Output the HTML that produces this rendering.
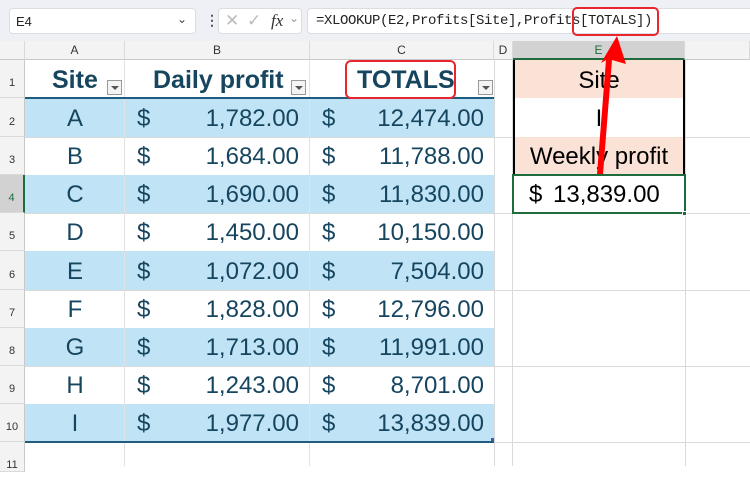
<!DOCTYPE html>
<html><head><meta charset="utf-8"><style>
*{margin:0;padding:0;box-sizing:border-box}
body{width:750px;height:466px;overflow:hidden;background:#fff;font-family:"Liberation Sans",sans-serif;position:relative}
.abs{position:absolute}
.tb{left:0;top:0;width:750px;height:41px;background:#eff0f5}
.box{background:#fff;border:1px solid #dcdde2;border-radius:4px;top:8px;height:26px}
.ch{top:41px;height:19px;background:#f3f3f3;border-bottom:1px solid #c8c8c8;font-size:12px;color:#333;text-align:center;line-height:19px;border-right:1px solid #dadada}
.rh{left:0;width:25px;background:#f3f3f3;border-right:1px solid #c8c8c8;border-bottom:1px solid #dadada;font-size:11px;color:#333;text-align:center}
.cell{font-size:24px;color:#16455f;white-space:nowrap}
.vl{width:1px;background:#dadada}
.hl{height:1px;background:#dadada;left:25px;width:725px}
.dd{width:15px;height:15px;border:1px solid #999;background:#f4f4f4}
.dd:after{content:"";position:absolute;left:3px;top:5px;border-left:4px solid transparent;border-right:4px solid transparent;border-top:4px solid #555}
</style></head><body>
<div class="abs tb"></div>
<div class="abs box" style="left:9px;width:187px"><span class="abs" style="left:6px;top:5px;font-size:13px;color:#222">E4</span><span class="abs" style="right:8px;top:3px;font-size:12px;color:#444">&#8964;</span></div>
<div class="abs" style="left:205px;top:12px;font-size:14px;color:#555;font-weight:bold">&#8942;</div>
<div class="abs box" style="left:218px;width:84px"><span class="abs" style="left:6px;top:2px;font-size:17px;color:#bbb">&#10005;</span><span class="abs" style="left:28px;top:2px;font-size:17px;color:#bbb">&#10003;</span><span class="abs" style="left:52px;top:2px;font-size:17px;font-style:italic;font-family:'Liberation Serif',serif;color:#333">fx</span><span class="abs" style="left:70px;top:2px;font-size:12px;color:#999">&#8964;</span></div>
<div class="abs box" style="left:307px;width:450px"><span class="abs" style="left:8px;top:4px;font-size:14px;font-family:'Liberation Mono',monospace;color:#222;letter-spacing:-0.4px">=XLOOKUP(E2,Profits[Site],Profits[TOTALS])</span></div>
<div class="abs" style="left:572px;top:7px;width:87px;height:29px;border:2px solid #e8262e;border-radius:5px"></div>

<div class="abs ch" style="left:0;width:25px"></div>
<div class="abs ch" style="left:25px;width:100px">A</div>
<div class="abs ch" style="left:125px;width:185px">B</div>
<div class="abs ch" style="left:310px;width:184px">C</div>
<div class="abs ch" style="left:494px;width:19px">D</div>
<div class="abs ch" style="left:513px;width:172px;background:#d2d2d2;color:#1e6b3c;border-bottom:2px solid #1e6b3c">E</div>
<div class="abs ch" style="left:685px;width:65px"></div>

<div class="abs rh" style="top:60px;height:38px;line-height:46px">1</div>
<div class="abs rh" style="top:98px;height:39px;line-height:48px">2</div>
<div class="abs rh" style="top:137px;height:38px;line-height:46px">3</div>
<div class="abs rh" style="top:175px;height:38px;line-height:46px;background:#d2d2d2;color:#1e6b3c;border-right:2px solid #1e6b3c">4</div>
<div class="abs rh" style="top:213px;height:38px;line-height:46px">5</div>
<div class="abs rh" style="top:251px;height:39px;line-height:48px">6</div>
<div class="abs rh" style="top:290px;height:38px;line-height:46px">7</div>
<div class="abs rh" style="top:328px;height:38px;line-height:46px">8</div>
<div class="abs rh" style="top:366px;height:38px;line-height:46px">9</div>
<div class="abs rh" style="top:404px;height:38px;line-height:46px">10</div>
<div class="abs rh" style="top:442px;height:30px;line-height:46px">11</div>

<div class="abs" style="left:25px;top:98px;width:469px;height:39px;background:#c0e4f5"></div>
<div class="abs" style="left:25px;top:175px;width:469px;height:38px;background:#c0e4f5"></div>
<div class="abs" style="left:25px;top:251px;width:469px;height:39px;background:#c0e4f5"></div>
<div class="abs" style="left:25px;top:328px;width:469px;height:38px;background:#c0e4f5"></div>
<div class="abs" style="left:25px;top:404px;width:469px;height:38px;background:#c0e4f5"></div>

<div class="abs vl" style="left:124px;top:60px;height:406px;background:#e2e2e2"></div>
<div class="abs vl" style="left:309px;top:60px;height:406px;background:#e2e2e2"></div>
<div class="abs vl" style="left:494px;top:60px;height:406px"></div>
<div class="abs vl" style="left:512px;top:60px;height:406px"></div>
<div class="abs vl" style="left:685px;top:60px;height:406px"></div>
<div class="abs hl" style="top:213px"></div>
<div class="abs hl" style="top:290px"></div>
<div class="abs hl" style="top:366px"></div>
<div class="abs hl" style="top:137px"></div>
<div class="abs hl" style="top:442px"></div>
<div class="abs" style="left:25px;top:97px;width:469px;height:2px;background:#1f5c80"></div>
<div class="abs" style="left:25px;top:441px;width:469px;height:2px;background:#1f5c80"></div>

<div class="abs cell" style="left:52px;top:66px;font-weight:bold;font-size:25px">Site</div>
<div class="abs dd" style="left:107px;top:80px"></div>
<div class="abs cell" style="left:153px;top:66px;font-weight:bold;font-size:25px">Daily profit</div>
<div class="abs dd" style="left:291px;top:80px"></div>
<div class="abs cell" style="left:357px;top:66px;font-weight:bold;font-size:25px">TOTALS</div>
<div class="abs" style="left:345px;top:60px;width:111px;height:39px;border:2px solid #e8262e;border-radius:6px"></div>
<div class="abs dd" style="left:478px;top:80px"></div>

<div style="position:absolute;left:0;top:0">
<div class="abs cell" style="left:25px;width:100px;text-align:center;top:105px">A</div><div class="abs cell" style="left:137px;top:105px">$</div><div class="abs cell" style="right:451px;top:105px;position:fixed">1,782.00</div><div class="abs cell" style="left:322px;top:105px">$</div><div class="abs cell" style="right:266px;top:105px;position:fixed">12,474.00</div>
<div class="abs cell" style="left:25px;width:100px;text-align:center;top:143px">B</div><div class="abs cell" style="left:137px;top:143px">$</div><div class="abs cell" style="right:451px;top:143px;position:fixed">1,684.00</div><div class="abs cell" style="left:322px;top:143px">$</div><div class="abs cell" style="right:266px;top:143px;position:fixed">11,788.00</div>
<div class="abs cell" style="left:25px;width:100px;text-align:center;top:181px">C</div><div class="abs cell" style="left:137px;top:181px">$</div><div class="abs cell" style="right:451px;top:181px;position:fixed">1,690.00</div><div class="abs cell" style="left:322px;top:181px">$</div><div class="abs cell" style="right:266px;top:181px;position:fixed">11,830.00</div>
<div class="abs cell" style="left:25px;width:100px;text-align:center;top:219px">D</div><div class="abs cell" style="left:137px;top:219px">$</div><div class="abs cell" style="right:451px;top:219px;position:fixed">1,450.00</div><div class="abs cell" style="left:322px;top:219px">$</div><div class="abs cell" style="right:266px;top:219px;position:fixed">10,150.00</div>
<div class="abs cell" style="left:25px;width:100px;text-align:center;top:258px">E</div><div class="abs cell" style="left:137px;top:258px">$</div><div class="abs cell" style="right:451px;top:258px;position:fixed">1,072.00</div><div class="abs cell" style="left:322px;top:258px">$</div><div class="abs cell" style="right:266px;top:258px;position:fixed">7,504.00</div>
<div class="abs cell" style="left:25px;width:100px;text-align:center;top:296px">F</div><div class="abs cell" style="left:137px;top:296px">$</div><div class="abs cell" style="right:451px;top:296px;position:fixed">1,828.00</div><div class="abs cell" style="left:322px;top:296px">$</div><div class="abs cell" style="right:266px;top:296px;position:fixed">12,796.00</div>
<div class="abs cell" style="left:25px;width:100px;text-align:center;top:334px">G</div><div class="abs cell" style="left:137px;top:334px">$</div><div class="abs cell" style="right:451px;top:334px;position:fixed">1,713.00</div><div class="abs cell" style="left:322px;top:334px">$</div><div class="abs cell" style="right:266px;top:334px;position:fixed">11,991.00</div>
<div class="abs cell" style="left:25px;width:100px;text-align:center;top:372px">H</div><div class="abs cell" style="left:137px;top:372px">$</div><div class="abs cell" style="right:451px;top:372px;position:fixed">1,243.00</div><div class="abs cell" style="left:322px;top:372px">$</div><div class="abs cell" style="right:266px;top:372px;position:fixed">8,701.00</div>
<div class="abs cell" style="left:25px;width:100px;text-align:center;top:410px">I</div><div class="abs cell" style="left:137px;top:410px">$</div><div class="abs cell" style="right:451px;top:410px;position:fixed">1,977.00</div><div class="abs cell" style="left:322px;top:410px">$</div><div class="abs cell" style="right:266px;top:410px;position:fixed">13,839.00</div>
</div>
<div class="abs" style="left:491px;top:438px;width:3px;height:3px;background:#3b5bb5"></div>

<div class="abs" style="left:513px;top:60px;width:172px;height:38px;background:#fbe2d6"></div>
<div class="abs" style="left:513px;top:137px;width:172px;height:38px;background:#fbe2d6"></div>
<div class="abs" style="left:513px;top:60px;width:172px;height:116px;border:2px solid #000;border-top:none"></div>
<div class="abs cell" style="left:513px;width:172px;text-align:center;top:67px;color:#000">Site</div>
<div class="abs cell" style="left:513px;width:172px;text-align:center;top:105px;color:#000">I</div>
<div class="abs cell" style="left:513px;width:172px;text-align:center;top:143px;color:#000">Weekly profit</div>
<div class="abs" style="left:512px;top:174px;width:174px;height:40px;border:2px solid #1e6b3c"></div>
<div class="abs" style="left:682px;top:211px;width:5px;height:5px;background:#1e6b3c;border:1px solid #fff"></div>
<div class="abs cell" style="left:529px;top:181px;color:#000">$</div>
<div class="abs cell" style="left:553px;top:181px;color:#000">13,839.00</div>

<svg class="abs" style="left:0;top:0" width="750" height="466"><path d="M597 174 L606 60 L601 63 L617 36 L626 64 L612 60 L603 174 Z" fill="#f00"/></svg>
</body></html>
